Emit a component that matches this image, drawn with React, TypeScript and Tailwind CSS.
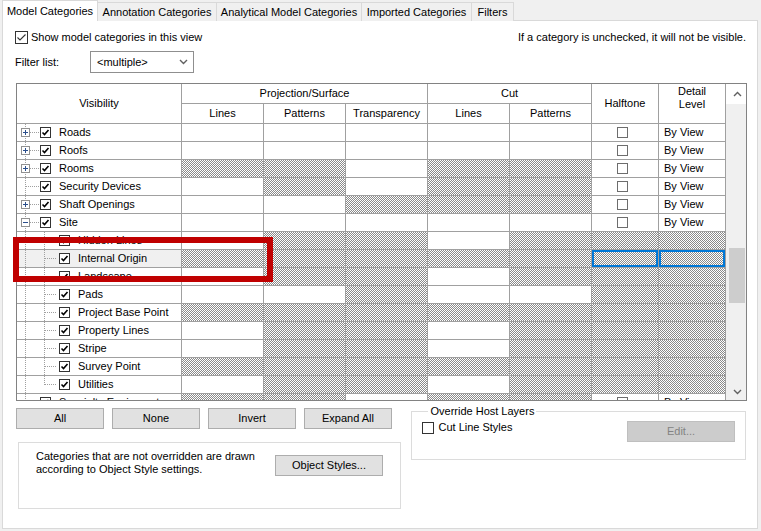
import React from 'react'

type Row = {
  label: string
  level: 0 | 1
  exp?: '+' | '-'
  hatch: string
  last?: boolean
  selected?: boolean
}

// L P T | CL CP | H D   (1 = overridden / hatched)
const rows: Row[] = [
  { label: 'Roads', level: 0, exp: '+', hatch: '0000000' },
  { label: 'Roofs', level: 0, exp: '+', hatch: '0000000' },
  { label: 'Rooms', level: 0, exp: '+', hatch: '1101100' },
  { label: 'Security Devices', level: 0, hatch: '0101100' },
  { label: 'Shaft Openings', level: 0, exp: '+', hatch: '0011100' },
  { label: 'Site', level: 0, exp: '-', hatch: '0000000' },
  { label: 'Hidden Lines', level: 1, hatch: '0110111' },
  { label: 'Internal Origin', level: 1, hatch: '1111111', selected: true },
  { label: 'Landscape', level: 1, hatch: '0110111' },
  { label: 'Pads', level: 1, hatch: '0010011' },
  { label: 'Project Base Point', level: 1, hatch: '1111111' },
  { label: 'Property Lines', level: 1, hatch: '0110111' },
  { label: 'Stripe', level: 1, hatch: '0110111' },
  { label: 'Survey Point', level: 1, hatch: '1111111' },
  { label: 'Utilities', level: 1, hatch: '0110111', last: true },
  { label: 'Specialty Equipment', level: 0, hatch: '1101100' },
]

const hatchBg =
  'bg-[image:repeating-conic-gradient(#8a8a8a_0_25%,#ffffff_0_50%)] bg-[length:2px_2px]'

const dots = {
  stroke: '#a0a0a0',
  strokeDasharray: '1 1',
  shapeRendering: 'crispEdges' as const,
}

function Tree({ row }: { row: Row }) {
  if (row.level === 0) {
    return (
      <svg width="23" height="17" className="shrink-0">
        <line x1="8.5" y1="0" x2="8.5" y2="17" {...dots} />
        <line x1="9" y1="8.5" x2="23" y2="8.5" {...dots} />
        {row.exp && (
          <g shapeRendering="crispEdges">
            <rect x="4.5" y="4.5" width="8" height="8" fill="#fff" stroke="#919191" />
            <line x1="6" y1="8.5" x2="11" y2="8.5" stroke="#2b4f8c" />
            {row.exp === '+' && <line x1="8.5" y1="6" x2="8.5" y2="11" stroke="#2b4f8c" />}
          </g>
        )}
      </svg>
    )
  }
  return (
    <svg width="42" height="17" className="shrink-0">
      <line x1="8.5" y1="0" x2="8.5" y2="17" {...dots} />
      <line x1="27.5" y1="0" x2="27.5" y2={row.last ? 9 : 17} {...dots} />
      <line x1="28" y1="8.5" x2="40" y2="8.5" {...dots} />
    </svg>
  )
}

function GridCheck({ checked = true }: { checked?: boolean }) {
  return (
    <div className="w-[11px] h-[11px] shrink-0 border border-[#333333] bg-white flex items-center justify-center">
      {checked && (
        <svg width="9" height="9" viewBox="0 0 9 9">
          <path d="M1.5 4.5 L3.5 6.5 L7.5 2" fill="none" stroke="#000" strokeWidth="1.6" />
        </svg>
      )}
    </div>
  )
}

function Cell({ on, children, sel }: { on: boolean; children?: React.ReactNode; sel?: boolean }) {
  return (
    <div
      className={`flex items-center border-r border-b border-[#a0a0a0] ${on ? hatchBg : 'bg-white'} ${
        sel ? 'shadow-[inset_0_0_0_2px_#0078d7]' : ''
      }`}
    >
      {children}
    </div>
  )
}

function GridRow({ row }: { row: Row }) {
  const h = row.hatch.split('').map((c) => c === '1')
  return (
    <div className="grid grid-cols-[165px_82px_82px_82px_82px_82px_67px_67px] h-[18px] shrink-0">
      <div
        className={`flex items-center border-r border-b border-[#a0a0a0] ${
          row.selected ? 'bg-[#f0f0f0]' : 'bg-white'
        }`}
      >
        <Tree row={row} />
        <GridCheck />
        <span className="ml-[8px] whitespace-nowrap">{row.label}</span>
      </div>
      {h.slice(0, 5).map((on, i) => (
        <Cell key={i} on={on} />
      ))}
      <Cell on={h[5]} sel={row.selected}>
        {!h[5] && (
          <div className="w-full flex justify-center pr-[5px]">
            <div className="w-[11px] h-[11px] border border-[#6d6d6d] bg-white" />
          </div>
        )}
      </Cell>
      <Cell on={h[6]} sel={row.selected}>
        {!h[6] && <span className="pl-[5px] whitespace-nowrap">By View</span>}
      </Cell>
    </div>
  )
}

function Chevron({ up }: { up?: boolean }) {
  return (
    <svg width="9" height="6" viewBox="0 0 9 6">
      <polyline
        points={up ? '1,5 4.5,1.5 8,5' : '1,1 4.5,4.5 8,1'}
        fill="none"
        stroke="#606060"
        strokeWidth="1.4"
      />
    </svg>
  )
}

function HeadCell({ className = '', children }: { className?: string; children: React.ReactNode }) {
  return (
    <div
      className={`flex items-center justify-center text-center border-r border-b border-[#a0a0a0] bg-white ${className}`}
    >
      {children}
    </div>
  )
}

function WinButton({ children, className = '' }: { children: React.ReactNode; className?: string }) {
  return (
    <div
      className={`h-[21px] flex items-center justify-center bg-[#e1e1e1] border border-[#adadad] ${className}`}
    >
      {children}
    </div>
  )
}

export default function App() {
  const tabs = [
    { label: 'Annotation Categories', w: 'w-[119px]' },
    { label: 'Analytical Model Categories', w: 'w-[145px]' },
    { label: 'Imported Categories', w: 'w-[110px]' },
    { label: 'Filters', w: 'w-[42px]' },
  ]

  return (
    <div className="relative w-[761px] h-[531px] overflow-hidden bg-[#f0f0f0] pl-[2px] text-[11px] leading-[13px] text-black font-['Liberation_Sans',Arial,sans-serif]">
      {/* tab strip */}
      <div className="relative z-10 flex items-end h-[21px]">
        <div className="w-[96px] h-[21px] flex items-center justify-center bg-white border border-b-0 border-[#d9d9d9]">
          Model Categories
        </div>
        {tabs.map((t) => (
          <div
            key={t.label}
            className={`${t.w} h-[19px] flex items-center justify-center bg-[#f0f0f0] border border-l-0 border-b-0 border-[#d9d9d9]`}
          >
            {t.label}
          </div>
        ))}
      </div>

      {/* tab panel */}
      <div className="-mt-px w-[756px] h-[509px] bg-white border border-[#d9d9d9] pl-[12px] pr-[11px]">
        <div className="mt-[10px] flex items-center justify-between h-[13px]">
          <div className="flex items-center">
            <div className="w-[13px] h-[13px] border border-[#333333] bg-white flex items-center justify-center">
              <svg width="11" height="11" viewBox="0 0 11 11">
                <path d="M1.5 5.5 L4 8 L9.5 2.5" fill="none" stroke="#333" strokeWidth="1.1" />
              </svg>
            </div>
            <span className="ml-[3px]">Show model categories in this view</span>
          </div>
          <span>If a category is unchecked, it will not be visible.</span>
        </div>

        <div className="mt-[7px] flex items-center h-[22px]">
          <span className="w-[75px]">Filter list:</span>
          <div className="w-[104px] h-[22px] border border-[#8f8f8f] bg-white flex items-center justify-between pl-[6px] pr-[5px]">
            <span>&lt;multiple&gt;</span>
            <Chevron />
          </div>
        </div>

        {/* visibility grid */}
        <div className="ml-px mt-[10px] w-[731px] h-[318px] border border-[#828282] flex overflow-hidden">
          <div className="w-[709px] flex flex-col overflow-hidden">
            <div className="grid grid-cols-[165px_82px_82px_82px_82px_82px_67px_67px] grid-rows-[20px_20px] shrink-0">
              <HeadCell className="row-span-2">Visibility</HeadCell>
              <HeadCell className="col-span-3">Projection/Surface</HeadCell>
              <HeadCell className="col-span-2">Cut</HeadCell>
              <HeadCell className="row-span-2">Halftone</HeadCell>
              <HeadCell className="row-span-2 flex-col leading-[13px] pb-[12px]">
                <span>Detail</span>
                <span>Level</span>
              </HeadCell>
              <HeadCell>Lines</HeadCell>
              <HeadCell>Patterns</HeadCell>
              <HeadCell>Transparency</HeadCell>
              <HeadCell>Lines</HeadCell>
              <HeadCell>Patterns</HeadCell>
            </div>
            {rows.map((r) => (
              <GridRow key={r.label} row={r} />
            ))}
          </div>
          <div className="w-[20px] flex flex-col bg-[#f0f0f0]">
            <div className="h-[20px] flex items-center justify-center pl-[2px] bg-white">
              <Chevron up />
            </div>
            <div className="mt-[144px] ml-[3px] w-[16px] h-[55px] bg-[#cdcdcd]" />
            <div className="flex-1" />
            <div className="h-[16px] flex items-center justify-center pl-[2px]">
              <Chevron />
            </div>
          </div>
        </div>

        {/* bottom area */}
        <div className="flex">
          <div className="ml-px w-[386px]">
            <div className="mt-[7px] flex gap-[8px]">
              <WinButton className="w-[88px]">All</WinButton>
              <WinButton className="w-[88px]">None</WinButton>
              <WinButton className="w-[88px]">Invert</WinButton>
              <WinButton className="w-[88px]">Expand All</WinButton>
            </div>
            <div className="mt-[13px] ml-[2px] w-[383px] h-[67px] border border-[#dcdcdc] flex justify-between pl-[17px] pr-[17px]">
              <div className="pt-[7px]">
                <div>Categories that are not overridden are drawn</div>
                <div>according to Object Style settings.</div>
              </div>
              <WinButton className="mt-[12px] w-[108px]">Object Styles...</WinButton>
            </div>
          </div>
          <fieldset className="ml-[10px] mt-[4px] w-[335px] h-[55px] border border-[#dcdcdc] pl-[10px] pr-[10px]">
            <legend className="ml-[6px] px-[2px] leading-[13px]">Override Host Layers</legend>
            <div className="flex items-start justify-between pt-[3px]">
              <div className="flex items-center">
                <div className="w-[12px] h-[12px] border border-[#333333] bg-white" />
                <span className="ml-[4px]">Cut Line Styles</span>
              </div>
              <div className="w-[108px] h-[21px] flex items-center justify-center bg-[#cccccc] border border-[#bfbfbf] text-[#838383]">
                Edit...
              </div>
            </div>
          </fieldset>
        </div>
      </div>

      {/* red callout around Internal Origin */}
      <div className="absolute left-[13px] top-[237px] w-[260px] h-[45px] border-[6px] border-[#c00000] z-20" />
    </div>
  )
}
